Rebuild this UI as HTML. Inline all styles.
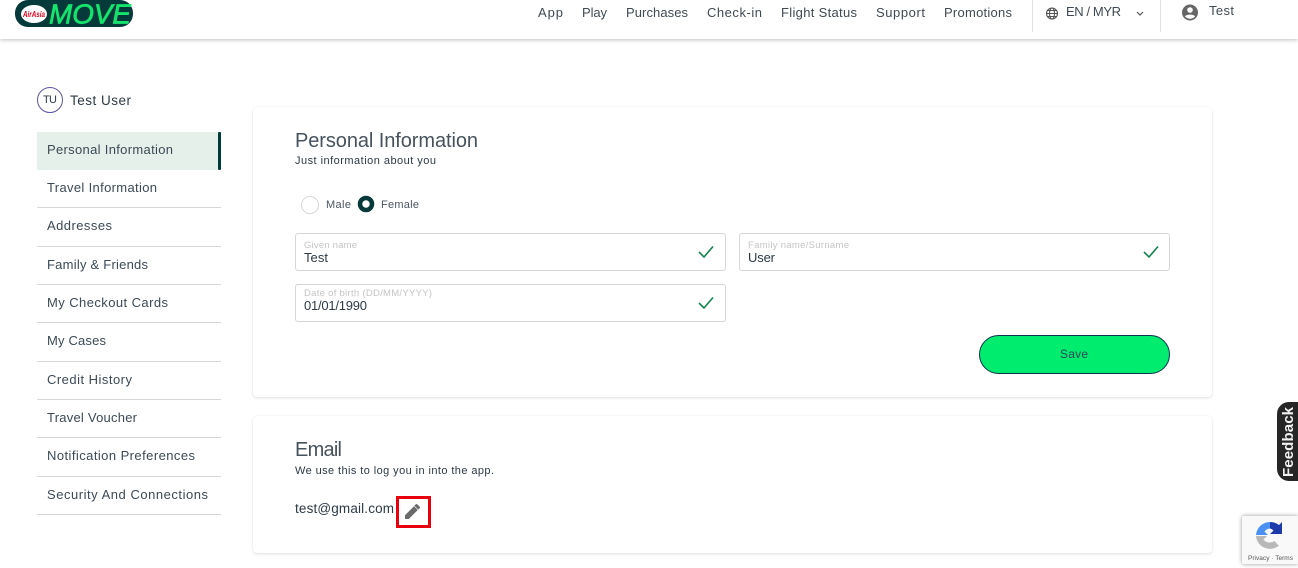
<!DOCTYPE html>
<html><head><meta charset="utf-8"><style>
html,body{margin:0;padding:0;width:1298px;height:568px;overflow:hidden;background:#fff}
.a{position:absolute;box-sizing:border-box}
.card{left:253px;width:959px;background:#fff;border-radius:4px;box-shadow:0 1px 3px rgba(0,0,0,.12),0 0 1px rgba(0,0,0,.06)}
.in{border:1px solid #d6d6d9;border-radius:3px;background:#fff}
svg text{font-family:"Liberation Sans",sans-serif}
</style></head><body>
<div class="a" style="left:0;top:0;width:1298px;height:39px;background:#fff;box-shadow:0 1px 4px rgba(0,0,0,.25)"></div>
<div class="a card" style="top:107px;height:290px"></div>
<div class="a card" style="top:416px;height:137px"></div>
<div class="a" style="left:37px;top:132px;width:184px;height:38px;background:#e6f0eb"></div>
<div class="a" style="left:218px;top:132px;width:3px;height:38px;background:#003b3c;border-radius:1px"></div>
<div class="a in" style="left:295px;top:233px;width:431px;height:38px"></div>
<div class="a in" style="left:739px;top:233px;width:431px;height:38px"></div>
<div class="a in" style="left:295px;top:284px;width:431px;height:38px"></div>
<div class="a" style="left:979px;top:335px;width:191px;height:39px;background:#00ec6e;border:1px solid #0e3350;border-radius:20px"></div>
<div class="a" style="left:396px;top:496px;width:35px;height:32px;border:3px solid #e8000d"></div>
<div class="a" style="left:1277px;top:402px;width:21px;height:79px;background:#262626;border-radius:12px 0 0 12px"></div>
<div class="a" style="left:1242px;top:516px;width:56px;height:48px;background:#f9f9f9;border-radius:2px 0 0 2px;box-shadow:0 0 4px rgba(0,0,0,.4)"></div>
<svg class="a" style="left:0;top:0" width="1298" height="568" viewBox="0 0 1298 568">
<!-- logo -->
<rect x="15" y="0" width="118" height="27" rx="13" fill="#06393a"/>
<ellipse cx="34" cy="14" rx="13" ry="9" fill="#fff"/>
<text x="23" y="17" textLength="22" lengthAdjust="spacingAndGlyphs" font-size="8.500" font-weight="700" font-style="italic" fill="#e2001a">AirAsia</text>
<text x="49" y="23.500" textLength="82" lengthAdjust="spacingAndGlyphs" font-size="28" font-style="italic" fill="#14e36c" stroke="#14e36c" stroke-width=".7">MOVE</text>
<!-- nav -->
<g font-size="13" fill="#3f4a52">
<text x="538" y="17" textLength="25">App</text>
<text x="582" y="17" textLength="25">Play</text>
<text x="626" y="17" textLength="62">Purchases</text>
<text x="707" y="17" textLength="55">Check-in</text>
<text x="781" y="17" textLength="76">Flight Status</text>
<text x="876" y="17" textLength="49">Support</text>
<text x="944" y="17" textLength="68">Promotions</text>
<text x="1066" y="16" textLength="55">EN / MYR</text>
<text x="1209" y="15" textLength="25">Test</text>
</g>
<path d="M1032.500 0V32M1160.500 0V32" stroke="#e2e2e2"/>
<g fill="none" stroke="#555" stroke-width="1.100"><circle cx="1052" cy="13.500" r="5.500"/><ellipse cx="1052" cy="13.500" rx="2.500" ry="5.500"/><path d="M1046.500 13.500h11M1047.500 10.500h9M1047.500 16.500h9"/></g>
<path d="M1137 12l3 3 3-3" fill="none" stroke="#555" stroke-width="1.200"/>
<circle cx="1190" cy="12.500" r="8" fill="#666"/><circle cx="1190" cy="10" r="2.800" fill="#fff"/><path d="M1185 16.500c1-2.500 9-2.500 10 0-1.300 1.500-3 2.200-5 2.200s-3.700-.7-5-2.200z" fill="#fff"/>
<!-- user -->
<circle cx="50" cy="100" r="12.500" fill="#fff" stroke="#5a55a8" stroke-width="1"/>
<text x="43" y="103" textLength="14" font-size="11" fill="#2c3a44">TU</text>
<text x="70" y="105" textLength="61" font-size="13.500" fill="#2c3a44">Test User</text>
<!-- sidebar -->
<g font-size="13" fill="#3b4a54">
<text x="47" y="154" textLength="126">Personal Information</text>
<text x="47" y="192" textLength="110">Travel Information</text>
<text x="47" y="230" textLength="65">Addresses</text>
<text x="47" y="269" textLength="101">Family &amp; Friends</text>
<text x="47" y="307" textLength="121">My Checkout Cards</text>
<text x="47" y="345" textLength="59">My Cases</text>
<text x="47" y="384" textLength="85">Credit History</text>
<text x="47" y="422" textLength="90">Travel Voucher</text>
<text x="47" y="460" textLength="148">Notification Preferences</text>
<text x="47" y="499" textLength="161">Security And Connections</text>
</g>
<path d="M37 207.500h184M37 246.500h184M37 284.500h184M37 322.500h184M37 361.500h184M37 399.500h184M37 437.500h184M37 476.500h184M37 514.500h184" stroke="#d8d8d8"/>
<!-- card 1 -->
<text x="295" y="147" textLength="183" font-size="20" fill="#46525c">Personal Information</text>
<text x="295" y="164" textLength="141" font-size="11" fill="#2c3a44">Just information about you</text>
<circle cx="310" cy="205" r="8.500" fill="#fff" stroke="#d8d8d8"/>
<circle cx="366" cy="204" r="6" fill="#fff" stroke="#06393a" stroke-width="4.500"/>
<text x="326" y="208" textLength="25" font-size="11" fill="#4a5560">Male</text>
<text x="381" y="208" textLength="38" font-size="11" fill="#4a5560">Female</text>
<g font-size="9.500" fill="#c4c4c4">
<text x="304" y="248" textLength="53">Given name</text>
<text x="748" y="248" textLength="101">Family name/Surname</text>
<text x="304" y="296" textLength="128">Date of birth (DD/MM/YYYY)</text>
</g>
<g font-size="13" fill="#2c3a44">
<text x="304" y="262" textLength="24">Test</text>
<text x="748" y="262" textLength="27">User</text>
<text x="304" y="310" textLength="63">01/01/1990</text>
</g>
<g fill="none" stroke="#12834f" stroke-width="1.600"><path d="M699 252l5 5 9-10.500M1144 252l5 5 9-10.500M699 303l5 5 9-10.500"/></g>
<text x="1060" y="358" textLength="28" font-size="12" fill="#24475a">Save</text>
<!-- card 2 -->
<text x="295" y="456" textLength="47" font-size="20" fill="#46525c">Email</text>
<text x="295" y="474" textLength="199" font-size="11" fill="#2c3a44">We use this to log you in into the app.</text>
<text x="295" y="513" textLength="99" font-size="13.500" fill="#2c3a44">test@gmail.com</text>
<path d="M405 515.200V519h3.800l9-9-3.800-3.800zM419.700 508.200c.4-.4.400-1 0-1.400l-2.500-2.500c-.4-.4-1-.4-1.400 0l-1.400 1.400 3.800 3.800z" fill="#6b6b6b"/>
<!-- feedback -->
<text transform="translate(1293 477) rotate(-90)" textLength="70" font-size="15" font-weight="700" fill="#f2f2f2">Feedback</text>
<!-- recaptcha -->
<path d="M1270 522c3.500 0 6.500 1 9 3l3-3v12h-12l3.500-3.500a8 8 0 0 0-3.500-2z" fill="#1c3aa9"/>
<path d="M1256 535a14 14 0 0 1 14-13v6.500a8 8 0 0 0-5.500 3l3.500 3.500z" fill="#4a90f5"/>
<path d="M1256 536h11l-3.500 3.500a8 8 0 0 0 11 1.500l3 3.500 1.500 1a14 14 0 0 1-23-9.500z" fill="#b8b8b8"/>
<text x="1248" y="560" textLength="45" font-size="6.500" fill="#555">Privacy · Terms</text>
</svg>
</body></html>
